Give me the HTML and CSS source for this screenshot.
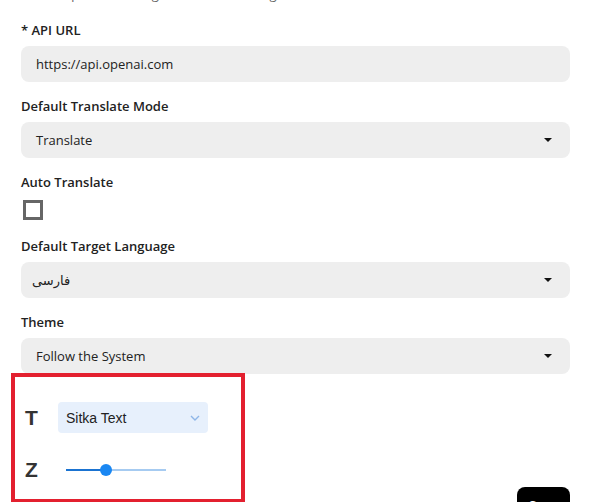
FILE: index.html
```html
<!DOCTYPE html>
<html lang="en">
<head>
  <meta charset="UTF-8">
  <title>Settings</title>
  <link rel="stylesheet" href="styles.css">
</head>
<body>

  <div class="page">
    <p class="hint">ensure quote doubling and load balancing.</p>

    <div class="field">
      <label class="label">* API URL</label>
      <div class="input">https://api.openai.com</div>
    </div>

    <div class="field">
      <label class="label">Default Translate Mode</label>
      <div class="input select">Translate<span class="caret"></span></div>
    </div>

    <div class="field check-field">
      <label class="label">Auto Translate</label>
      <div class="checkbox"></div>
    </div>

    <div class="field">
      <label class="label">Default Target Language</label>
      <div class="input select"><span class="fa" dir="rtl">فارسی</span><span class="caret"></span></div>
    </div>

    <div class="field">
      <label class="label">Theme</label>
      <div class="input select">Follow the System<span class="caret"></span></div>
    </div>

    <div class="bottom">
      <div class="tools">
        <div class="tool-row">
          <span class="glyph">T</span>
          <div class="font-select">
            Sitka Text
            <svg class="chev" width="10" height="6" viewBox="0 0 10 6"><path d="M1 1l4 4 4-4" fill="none" stroke="#8fb6e8" stroke-width="1.4"/></svg>
          </div>
        </div>
        <div class="tool-row">
          <span class="glyph">Z</span>
          <div class="slider">
            <div class="track-fill"></div>
            <div class="thumb"></div>
          </div>
        </div>
      </div>
      <button class="save">Save</button>
    </div>
  </div>

</body>
</html>
```

FILE: styles.css
```css
body {
  margin: 0;
  background: #fff;
  font-family: "Open Sans", "DejaVu Sans", sans-serif;
  color: #1f1f1f;
  overflow: hidden;
}

.page {
  padding: 0 23px 0 21px;
  margin-top: -16px;
}

.hint {
  margin: 0 0 16px;
  font-size: 13px;
  line-height: 20px;
  color: #666;
}

.field {
  margin-bottom: 14px;
}

.label {
  display: block;
  font-size: 13px;
  font-weight: 600;
  line-height: 20px;
  margin-bottom: 6px;
  color: #222;
}

.input {
  height: 36px;
  background: #eeeeee;
  border-radius: 8px;
  padding: 0 15px;
  display: flex;
  align-items: center;
  font-size: 13px;
  color: #222;
}

.select {
  justify-content: space-between;
}

.fa {
  font-family: "DejaVu Sans", sans-serif;
  font-size: 13px;
  margin-left: -4px;
}

.caret {
  width: 0;
  height: 0;
  border-left: 4px solid transparent;
  border-right: 4px solid transparent;
  border-top: 4px solid #111;
  margin-right: 3px;
}

.check-field .label {
  margin-bottom: 8px;
}

.check-field {
  margin-bottom: 16px;
}

.checkbox {
  width: 14px;
  height: 14px;
  border: 3px solid #666;
  margin-left: 2px;
}

.bottom {
  display: flex;
  justify-content: space-between;
  align-items: flex-start;
  margin-top: -15px;
}

.tools {
  margin-left: -10px;
  width: 216px;
  border: 4px solid #e3202f;
  padding: 25px 0 17px 10px;
}

.tool-row {
  display: flex;
  align-items: center;
}

.tool-row + .tool-row {
  margin-top: 25px;
}

.glyph {
  width: 33px;
  font-family: "Liberation Sans", Arial, sans-serif;
  font-weight: bold;
  font-size: 21px;
  color: #333;
}

.font-select {
  width: 134px;
  height: 31px;
  padding: 0 8px;
  background: #e7f0fc;
  border-radius: 4px;
  display: flex;
  align-items: center;
  justify-content: space-between;
  font-family: "Liberation Sans", Arial, sans-serif;
  font-size: 14px;
  color: #222;
}

.slider {
  position: relative;
  width: 100px;
  height: 20px;
  margin-left: 8px;
}

.slider::before {
  content: "";
  position: absolute;
  left: 0;
  right: 0;
  top: 9px;
  height: 2px;
  background: #a6cbf1;
}

.track-fill {
  position: absolute;
  left: 0;
  top: 9px;
  width: 40px;
  height: 2px;
  background: #1a73d1;
}

.thumb {
  position: absolute;
  left: 34px;
  top: 4px;
  width: 12px;
  height: 12px;
  border-radius: 50%;
  background: #1a87f2;
}

.save {
  margin-top: 114px;
  width: 53px;
  height: 36px;
  background: #000;
  color: #fff;
  border: none;
  border-radius: 8px;
  font-family: "Open Sans", sans-serif;
  font-size: 13px;
  font-weight: 600;
}
```
